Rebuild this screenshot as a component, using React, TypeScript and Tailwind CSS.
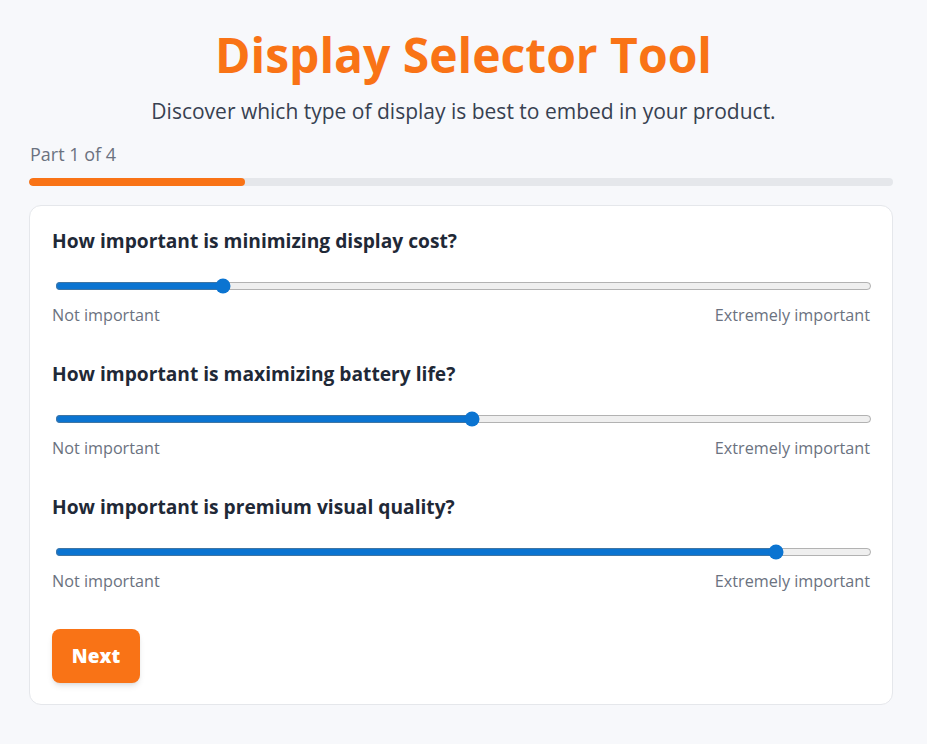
import React, { useState } from "react";

const questions = [
  { q: "How important is minimizing display cost?", v: 20 },
  { q: "How important is maximizing battery life?", v: 51 },
  { q: "How important is premium visual quality?", v: 89 },
];

export default function App() {
  const [vals, setVals] = useState(questions.map((q) => q.v));
  return (
    <div
      className="min-h-[744px] w-full bg-[#f7f8fb] pt-[23px]"
      style={{ fontFamily: '"Open Sans", sans-serif' }}
    >
      <h1 className="text-center text-[48px] font-bold leading-[64px] text-[#f97316]">
        Display Selector Tool
      </h1>
      <p className="mt-[10px] text-center text-[21px] leading-[28px] text-[#374151]">
        Discover which type of display is best to embed in your product.
      </p>
      <div className="ml-[29px] w-[864px]">
        <div className="mt-[16px] pl-px text-[18px] leading-[26px] text-[#6b7280]">Part 1 of 4</div>
        <div className="mt-[11px] h-[8px] w-full overflow-hidden rounded-full bg-[#e5e7eb]">
          <div className="h-full w-1/4 rounded-full bg-[#f97316]" />
        </div>
        <div className="mt-[19px] rounded-xl border border-[#e5e7eb] bg-white px-[22px] pb-[21px] pt-[22px]">
          {questions.map((item, i) => (
            <div key={i} className={i > 0 ? "mt-[34px]" : ""}>
              <div className="text-[19.2px] font-bold leading-[26px] text-[#1f2937]">{item.q}</div>
              <input
                type="range"
                min={0}
                max={100}
                value={vals[i]}
                onChange={(e) => {
                  const n = [...vals];
                  n[i] = Number(e.target.value);
                  setVals(n);
                }}
                className="mt-[24px] ml-[3px] block w-[817px] accent-[#0b74d1]"
              />
              <div className="mt-[9px] flex justify-between text-[16.2px] leading-[24px] text-[#6b7280]">
                <span>Not important</span>
                <span>Extremely important</span>
              </div>
            </div>
          ))}
          <button className="mt-[36px] h-[54px] w-[88px] rounded-lg bg-[#f97316] text-[19px] font-extrabold text-white shadow-md">
            Next
          </button>
        </div>
      </div>
    </div>
  );
}
